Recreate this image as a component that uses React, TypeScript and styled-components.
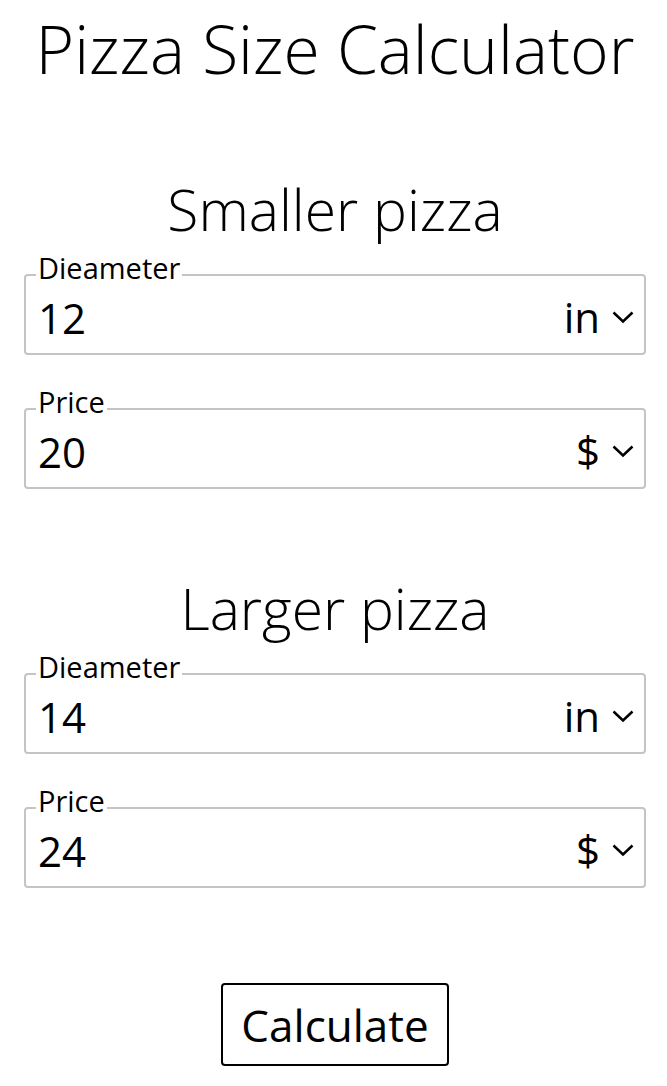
import styled, { createGlobalStyle } from "styled-components";

const GlobalStyle = createGlobalStyle`
  body {
    margin: 0;
    background: #fff;
    color: #000;
    font-family: "Open Sans", "Noto Sans", "Liberation Sans", sans-serif;
  }
`;

const Page = styled.main`
  display: flex;
  flex-direction: column;
  padding: 0 21px 0 24px;
`;

const Title = styled.h1`
  margin: 8px 0 0;
  font-size: 66px;
  font-weight: 300;
  line-height: 80px;
  text-align: center;
`;

const Section = styled.section`
  display: flex;
  flex-direction: column;
  gap: 32px;
  margin-top: 86px;

  & + & {
    margin-top: 84px;
  }
`;

const SectionTitle = styled.h2`
  margin: 0 0 -23px;
  font-size: 57px;
  font-weight: 300;
  line-height: 70px;
  text-align: center;
`;

const Field = styled.fieldset`
  min-width: 0;
  margin: 0;
  padding: 0 10px 16px 12px;
  border: 2px solid #c4c4c4;
  border-radius: 4px;
  display: flex;
  align-items: center;
`;

const Legend = styled.legend`
  margin-left: -2px;
  padding: 0 2px 14px;
  font-size: 29px;
  line-height: 30px;
`;

const Value = styled.input`
  flex: 1;
  width: 0;
  min-width: 0;
  border: none;
  outline: none;
  padding: 0;
  background: none;
  font: inherit;
  font-size: 42px;
  line-height: 40px;
  height: 40px;
  color: #000;
`;

const Unit = styled.span`
  display: flex;
  align-items: center;
  gap: 12px;
  font-size: 42px;
  line-height: 40px;
`;

const Chevron = () => (
  <svg width="22" height="14" viewBox="0 0 22 14" fill="none">
    <path d="M1.5 2.5 L11 11.5 L20.5 2.5" stroke="#000" strokeWidth="2.5" />
  </svg>
);

const ButtonRow = styled.div`
  display: flex;
  justify-content: center;
  margin: 95px 0 20px;
`;

const Button = styled.button`
  height: 83px;
  padding: 0 18px;
  border: 2px solid #000;
  border-radius: 4px;
  background: #fff;
  font-family: inherit;
  font-size: 44px;
  color: #000;
`;

type InputProps = { label: string; value: string; unit: string };

const NumberField = ({ label, value, unit }: InputProps) => (
  <Field>
    <Legend>{label}</Legend>
    <Value defaultValue={value} />
    <Unit>
      {unit}
      <Chevron />
    </Unit>
  </Field>
);

const PizzaSection = ({ title, diameter, price }: { title: string; diameter: string; price: string }) => (
  <Section>
    <SectionTitle>{title}</SectionTitle>
    <NumberField label="Dieameter" value={diameter} unit="in" />
    <NumberField label="Price" value={price} unit="$" />
  </Section>
);

export default function App() {
  return (
    <>
      <GlobalStyle />
      <Page>
        <Title>Pizza Size Calculator</Title>
        <PizzaSection title="Smaller pizza" diameter="12" price="20" />
        <PizzaSection title="Larger pizza" diameter="14" price="24" />
        <ButtonRow>
          <Button>Calculate</Button>
        </ButtonRow>
      </Page>
    </>
  );
}
